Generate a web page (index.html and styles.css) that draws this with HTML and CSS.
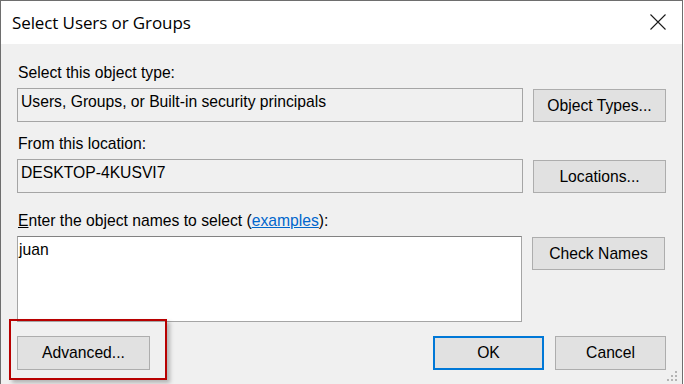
FILE: index.html
```html
<!DOCTYPE html>
<html>
<head>
<meta charset="utf-8">
<link rel="stylesheet" href="styles.css">
</head>
<body>
<div class="window">
  <div class="titlebar">
    <span class="title">Select Users or Groups</span>
    <svg class="close" width="16" height="16" viewBox="0 0 16 16"><path d="M0.5 0.5 L15.5 15.5 M15.5 0.5 L0.5 15.5" stroke="#1a1a1a" stroke-width="1.1" fill="none"/></svg>
  </div>
  <div class="content">
    <div class="label l1">Select this object type:</div>
    <div class="row">
      <div class="field">Users, Groups, or Built-in security principals</div>
      <div class="btn">Object Types...</div>
    </div>
    <div class="label l2">From this location:</div>
    <div class="row">
      <div class="field">DESKTOP-4KUSVI7</div>
      <div class="btn">Locations...</div>
    </div>
    <div class="label l3"><u>E</u>nter the object names to select (<a class="link">examples</a>):</div>
    <div class="row">
      <div class="textarea">juan</div>
      <div class="btn">Check Names</div>
    </div>
    <div class="bottom">
      <div class="btn adv">Advanced...</div>
      <div class="spacer"></div>
      <div class="btn ok">OK</div>
      <div class="btn cancel">Cancel</div>
    </div>
  </div>
  <div class="highlight"></div>
  <svg class="grip" width="12" height="12" viewBox="0 0 12 12">
    <rect x="8" y="0" width="2" height="2" fill="#b4b4b4"/>
    <rect x="4" y="4" width="2" height="2" fill="#b4b4b4"/>
    <rect x="8" y="4" width="2" height="2" fill="#b4b4b4"/>
    <rect x="0" y="8" width="2" height="2" fill="#b4b4b4"/>
    <rect x="4" y="8" width="2" height="2" fill="#b4b4b4"/>
    <rect x="8" y="8" width="2" height="2" fill="#b4b4b4"/>
  </svg>
</div>
</body>
</html>
```

FILE: styles.css
```css
html, body {
  margin: 0;
  padding: 0;
  background: #ffffff;
}
.window {
  position: relative;
  width: 681px;
  height: 383px;
  border: 1px solid #6e6e6e;
  border-bottom-color: #c8c8c8;
  background: #f0f0f0;
  font-family: "Liberation Sans", Arial, sans-serif;
  font-size: 15.7px;
  color: #000;
  overflow: hidden;
}
.titlebar {
  height: 43px;
  background: #ffffff;
  display: flex;
  align-items: center;
  justify-content: space-between;
  padding: 0 16px 0 11px;
}
.title {
  font-family: "Open Sans", "Segoe UI", sans-serif;
  font-size: 17px;
  letter-spacing: -0.1px;
  color: #000;
  margin-top: -1px;
}
.close {
  display: block;
  margin-top: -1px;
}
.content {
  padding: 0 16px;
  display: flex;
  flex-direction: column;
}
.label {
  height: 18px;
  line-height: 18px;
  padding-left: 1px;
}
.l1 { margin-top: 20px; margin-bottom: 6px; }
.l2 { margin-top: 13px; margin-bottom: 6px; }
.l3 { margin-top: 19px; margin-bottom: 6px; }
.row {
  display: flex;
  gap: 10px;
  align-items: flex-start;
}
.field {
  height: 32px;
  border: 1px solid #a5a5a5;
  background: #f0f0f0;
  padding: 0 0 0 3px;
  line-height: 25px;
  width: 501px;
  flex: none;
}
.textarea {
  width: 502px;
  height: 84px;
  border: 1px solid #a5a5a5;
  border-top-color: #828282;
  background: #ffffff;
  padding-left: 1px;
  line-height: 25px;
  flex: none;
}
.btn {
  width: 131px;
  height: 31px;
  border: 1px solid #adadad;
  background: #e1e1e1;
  display: flex;
  align-items: center;
  justify-content: center;
  margin-top: 1px;
  flex: none;
}
.row:last-of-type .btn { margin-top: 0; }
.bottom {
  display: flex;
  gap: 11px;
  margin-top: 14px;
}
.bottom .btn { margin-top: 0; height: 32px; }
.spacer { flex: 1; }
.ok {
  width: 107px;
  height: 30px !important;
  border: 2px solid #0078d7;
}
.cancel {
  width: 109px;
}
.link {
  color: #0066cc;
  text-decoration: underline;
}
.highlight {
  position: absolute;
  left: 8px;
  top: 318px;
  width: 154px;
  height: 57px;
  border: 2px solid #b80000;
  box-shadow: 3px 3px 4px rgba(0, 0, 0, 0.25);
}
.grip {
  position: absolute;
  right: 3px;
  bottom: 1px;
}
```
